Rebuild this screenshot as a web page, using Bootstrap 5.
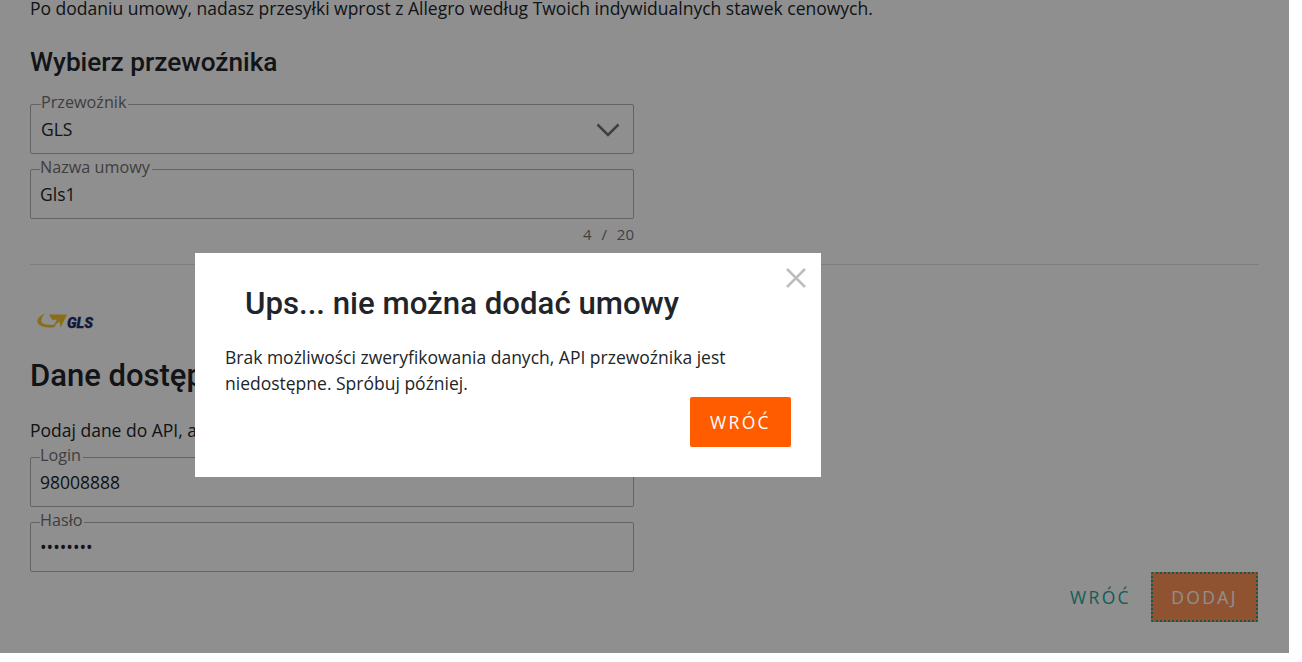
<!DOCTYPE html>
<html lang="pl">
<head>
<meta charset="utf-8">
<title>Umowa</title>
<link rel="stylesheet" href="https://cdn.jsdelivr.net/npm/bootstrap@5.3.0/dist/css/bootstrap.min.css">
<style>
html,body{height:100%;background:#fff;overflow:hidden}
body{font-family:"Open Sans","Liberation Sans",sans-serif;color:#212529;font-size:17.5px}
.stage{width:1289px;height:653px;position:relative;overflow:hidden;background:#fff;padding:0 30px}
.intro{line-height:24px;margin:-4px 0 0;height:24px}
.hd-a{font-family:Roboto,sans-serif;font-weight:500;font-size:26.2px;line-height:30px;margin:27px 0 0}
.hd-b{font-family:Roboto,sans-serif;font-weight:500;font-size:31px;line-height:36px;margin:28px 0 0}
.formw{width:604px}
.fieldset-x{border:1px solid #b0b0b0;border-radius:2px;margin:6px 0 0;padding:0 9px;height:59px;min-width:0}
.fieldset-x legend{float:none;width:auto;font-size:16.2px;line-height:15px;height:18px;margin:0;padding:0 2px 0 0;color:#707070}
.fieldset-x .val{line-height:24px;margin-top:4px}
.fieldset-x.sel{margin-top:18px;padding:0 13px 0 10px}
.chev{margin-top:5px}
.counter{font-size:15px;color:#757575;text-align:right;line-height:18px;margin-top:6px;word-spacing:6px}
.rule{border-top:1px solid #e0e0e0;margin:21px 0 0;opacity:1}
.logo{display:block;margin:47px 0 0 7px}
.desc{margin:24px 0 0;line-height:24px;height:24px}
.btn-go{background:#ff5c00;color:#fff;border:0;border-radius:2px;font-size:17.5px;letter-spacing:.135em;height:50px;padding:0 20px;display:inline-flex;align-items:center}
.btn-go:hover{background:#ff5c00;color:#fff}
.btn-back{color:#26a69a;background:none;border:0;font-size:17.5px;letter-spacing:.135em;padding:0}
.btn-add{background:#ff9559;outline:2px dotted #2b9a8d;outline-offset:-2px;width:107px;justify-content:center}
.btn-add:hover{background:#ff9559}
.actions{gap:20px;margin-right:1px;margin-top:0}
.overlay{position:absolute;inset:0;background:rgba(0,0,0,.44)}
.dlg{position:absolute;left:195px;top:253px;width:626px;height:224px;background:#fff;padding:0 30px}
.dlg-title{font-family:Roboto,sans-serif;font-weight:500;font-size:31.2px;line-height:34px;margin:34px 0 0 20px}
.dlg-body{line-height:26px;margin:23px 0 0}
.x-btn{position:absolute;right:14px;top:14px;background:none;border:0;padding:0;line-height:0}
.dlg-foot{position:absolute;right:30px;bottom:30px}
</style>
</head>
<body>
<div class="stage">
  <p class="intro">Po dodaniu umowy, nadasz przesyłki wprost z Allegro według Twoich indywidualnych stawek cenowych.</p>
  <h2 class="hd-a">Wybierz przewoźnika</h2>
  <div class="formw">
    <fieldset class="fieldset-x sel">
      <legend>Przewoźnik</legend>
      <div class="d-flex justify-content-between align-items-center">
        <div class="val">GLS</div>
        <svg class="chev" width="24" height="14" viewBox="0 0 24 14" fill="none" stroke="#707070" stroke-width="2.500"><path d="M1.500 1.500 12 12 22.500 1.500"/></svg>
      </div>
    </fieldset>
    <fieldset class="fieldset-x">
      <legend>Nazwa umowy</legend>
      <div class="val">Gls1</div>
    </fieldset>
    <div class="counter">4 / 20</div>
  </div>
  <hr class="rule">
  <svg class="logo" width="58" height="18" viewBox="0 0 58 18" role="img" aria-label="GLS">
    <path d="M8 1.500C3 3.500 0 6.500 .5 10c.6 4 8 6 16 5.500l3-3C12 13.500 5.500 12.500 4.500 10 3.800 7.800 5.500 4 8 1.500z" fill="#f5c32c"/>
    <path d="M12 2.500h18l-6.500 13-1-6-6 4.500 3.500-6.500-4.500.4z" fill="#f5c32c"/>
    <text x="30" y="15.500" font-family="Roboto,sans-serif" font-weight="900" font-style="italic" font-size="14.500" fill="#1b2f6b" stroke="#1b2f6b" stroke-width=".3">GLS</text>
  </svg>
  <h2 class="hd-b">Dane dostępowe</h2>
  <p class="desc">Podaj dane do API, aby dodać umowę.</p>
  <div class="formw">
    <fieldset class="fieldset-x">
      <legend>Login</legend>
      <div class="val">98008888</div>
    </fieldset>
    <fieldset class="fieldset-x">
      <legend>Hasło</legend>
      <div class="val">••••••••</div>
    </fieldset>
  </div>
  <div class="actions d-flex justify-content-end align-items-center">
    <button class="btn btn-back" type="button">WRÓĆ</button>
    <button class="btn btn-go btn-add" type="button">DODAJ</button>
  </div>
  <div class="overlay"></div>
  <div class="dlg">
    <button class="x-btn" type="button" aria-label="Zamknij">
      <svg width="22" height="22" viewBox="0 0 22 22" stroke="#bdbdbd" stroke-width="2.500" fill="none"><path d="M2 2 20 20M20 2 2 20"/></svg>
    </button>
    <h3 class="dlg-title">Ups... nie można dodać umowy</h3>
    <p class="dlg-body">Brak możliwości zweryfikowania danych, API przewoźnika jest niedostępne. Spróbuj później.</p>
    <div class="dlg-foot"><button class="btn btn-go" type="button">WRÓĆ</button></div>
  </div>
</div>
<script src="https://cdn.jsdelivr.net/npm/bootstrap@5.3.0/dist/js/bootstrap.bundle.min.js"></script>
</body>
</html>
